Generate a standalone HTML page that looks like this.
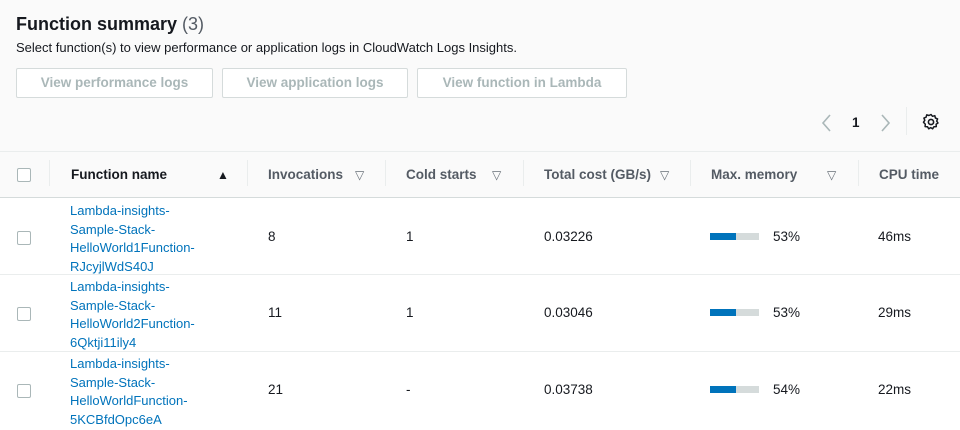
<!DOCTYPE html>
<html><head><style>
*{margin:0;padding:0;box-sizing:border-box}
body{width:960px;height:426px;overflow:hidden;font-family:"Liberation Sans",sans-serif;color:#16191f;background:#fff;position:relative}
.top{position:absolute;left:0;top:0;width:960px;height:198px;background:#fafafa}
.abs{position:absolute;white-space:nowrap}
h1{position:absolute;left:16px;top:14px;font-size:18px;font-weight:bold}
h1 span{font-weight:normal;color:#545b64}
.desc{left:16px;top:40px;font-size:13px}
.btn{position:absolute;top:68px;height:30px;border:1px solid #d5dbdb;background:#fff;color:#aab7b8;font-weight:bold;font-size:13.5px;text-align:center;line-height:28px;border-radius:2px}
.line{position:absolute;left:0;width:960px;height:1px;background:#eaeded}
.sep{position:absolute;top:160px;width:1px;height:26px;background:#eaeded}
.th{position:absolute;top:167px;font-size:13.5px;font-weight:bold;color:#545b64}
.cb{position:absolute;left:17px;width:14px;height:14px;border:1px solid #aab7b8;border-radius:2px;background:#fff}
.tri{position:absolute;top:168px;font-size:12px;color:#687078}
.td{position:absolute;font-size:13.5px}
.link{position:absolute;left:70px;font-size:13px;color:#0073bb;line-height:18.7px;white-space:nowrap}
.bar{position:absolute;left:710px;width:49px;height:7px;background:#d5dbdb}
.bar i{display:block;width:26px;height:7px;background:#0073bb}
</style></head><body>
<div class="top"></div>
<h1>Function summary <span>(3)</span></h1>
<div class="abs desc">Select function(s) to view performance or application logs in CloudWatch Logs Insights.</div>
<div class="btn" style="left:16px;width:197px">View performance logs</div>
<div class="btn" style="left:222px;width:186px">View application logs</div>
<div class="btn" style="left:417px;width:210px">View function in Lambda</div>
<svg class="abs" style="left:820px;top:113px" width="14" height="20"><path d="M10 2 L3 10 L10 18" stroke="#aab7b8" stroke-width="1.6" fill="none"/></svg>
<div class="abs" style="left:852px;top:115px;font-size:13.5px;font-weight:bold">1</div>
<svg class="abs" style="left:878px;top:113px" width="14" height="20"><path d="M4 2 L11 10 L4 18" stroke="#aab7b8" stroke-width="1.6" fill="none"/></svg>
<div class="abs" style="left:906px;top:107px;width:1px;height:28px;background:#eaeded"></div>
<svg class="abs" style="left:922px;top:113px" width="18" height="18" viewBox="0 0 18 18"><circle cx="9" cy="9" r="2.6" fill="none" stroke="#16191f" stroke-width="1.6"/><path d="M9 1.5l1.5 1.8 2.3-.6.6 2.3 2.2.9-.9 2.2 1.3 1.9-1.9 1.2.2 2.4-2.4.2-1.2 2-2-1.2-2 1.2-1.2-2-2.4-.2.2-2.4L1.5 9.2l1.3-1.9-.9-2.2 2.2-.9.6-2.3 2.3.6z" fill="none" stroke="#16191f" stroke-width="1.5" stroke-linejoin="round"/></svg>
<div class="line" style="top:151px"></div>
<div class="line" style="top:197px;background:#d5dbdb"></div>
<div class="line" style="top:274px"></div>
<div class="line" style="top:351px"></div>
<div class="cb" style="top:168px"></div>
<div class="sep" style="left:49px"></div><div class="sep" style="left:247px"></div><div class="sep" style="left:385px"></div><div class="sep" style="left:523px"></div><div class="sep" style="left:690px"></div><div class="sep" style="left:858px"></div>
<div class="th" style="left:71px;color:#16191f">Function name</div><div class="abs" style="left:217px;top:168px;font-size:12px">▲</div>
<div class="th" style="left:268px">Invocations</div><div class="tri" style="left:355px">▽</div>
<div class="th" style="left:406px">Cold starts</div><div class="tri" style="left:492px">▽</div>
<div class="th" style="left:544px">Total cost (GB/s)</div><div class="tri" style="left:660px">▽</div>
<div class="th" style="left:711px">Max. memory</div><div class="tri" style="left:827px">▽</div>
<div class="th" style="left:879px">CPU time</div>

<div class="cb" style="top:231px"></div>
<div class="link" style="top:202px">Lambda-insights-<br>Sample-Stack-<br>HelloWorld1Function-<br>RJcyjlWdS40J</div>
<div class="td" style="left:268px;top:229px">8</div><div class="td" style="left:406px;top:229px">1</div><div class="td" style="left:544px;top:229px">0.03226</div>
<div class="bar" style="top:233px"><i></i></div><div class="td" style="left:773px;top:229px">53%</div><div class="td" style="left:878px;top:229px">46ms</div>

<div class="cb" style="top:307px"></div>
<div class="link" style="top:278px">Lambda-insights-<br>Sample-Stack-<br>HelloWorld2Function-<br>6Qktji11ily4</div>
<div class="td" style="left:268px;top:305px">11</div><div class="td" style="left:406px;top:305px">1</div><div class="td" style="left:544px;top:305px">0.03046</div>
<div class="bar" style="top:309px"><i></i></div><div class="td" style="left:773px;top:305px">53%</div><div class="td" style="left:878px;top:305px">29ms</div>

<div class="cb" style="top:384px"></div>
<div class="link" style="top:355px">Lambda-insights-<br>Sample-Stack-<br>HelloWorldFunction-<br>5KCBfdOpc6eA</div>
<div class="td" style="left:268px;top:382px">21</div><div class="td" style="left:406px;top:382px">-</div><div class="td" style="left:544px;top:382px">0.03738</div>
<div class="bar" style="top:386px"><i></i></div><div class="td" style="left:773px;top:382px">54%</div><div class="td" style="left:878px;top:382px">22ms</div>
</body></html>
